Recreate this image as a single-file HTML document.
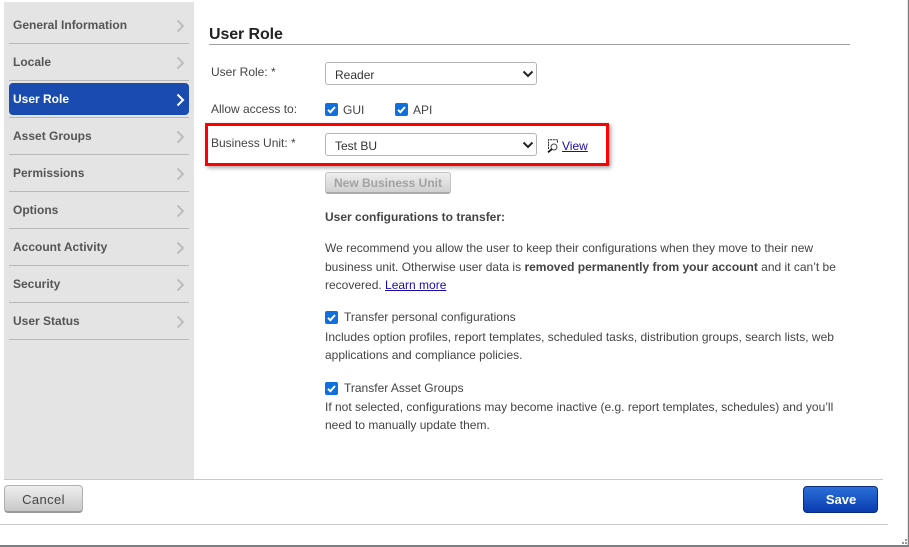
<!DOCTYPE html>
<html><head><meta charset="utf-8"><style>
html,body{margin:0;padding:0;background:#fff}
body{width:909px;height:547px;position:relative;overflow:hidden;font-family:"Liberation Sans",Arial,sans-serif;font-size:12px;color:#444}
.a{position:absolute;white-space:nowrap}
.t{line-height:16px}
.nav{left:13px;font-weight:bold;color:#555;line-height:16px}
.ln{position:absolute;left:9px;width:180px;height:1px;background:#b8b8b8}
.ch{position:absolute;left:175.500px;width:9px;height:14px}
.sel{position:absolute;left:325px;width:210px;background:#fff;border:1px solid #b4b4b4;border-radius:3px;height:21px;line-height:25px;color:#333}
.sel span{position:absolute;left:9px;top:0}
.sel svg{position:absolute;right:2px;top:7px}
.cb{position:absolute;width:13px;height:13px;background:#0f6fdc;border-radius:2px}
a{color:#1a0dab;text-decoration:underline}
</style></head><body>
<div class="a" style="left:4px;top:2px;width:190px;height:477px;background:#e4e4e4"></div>

<div class="a nav" style="top:17px">General Information</div>
<div class="a nav" style="top:54px">Locale</div>
<div class="a" style="left:9px;top:83px;width:180px;height:32px;background:#1a4cb0;border-radius:4px"></div>
<div class="a nav" style="top:91px;color:#fff">User Role</div>
<div class="a nav" style="top:128px">Asset Groups</div>
<div class="a nav" style="top:165px">Permissions</div>
<div class="a nav" style="top:202px">Options</div>
<div class="a nav" style="top:239px">Account Activity</div>
<div class="a nav" style="top:276px">Security</div>
<div class="a nav" style="top:313px">User Status</div>

<div class="ln" style="top:43px"></div><div class="ln" style="top:80px"></div><div class="ln" style="top:117px"></div><div class="ln" style="top:154px"></div><div class="ln" style="top:191px"></div><div class="ln" style="top:228px"></div><div class="ln" style="top:265px"></div><div class="ln" style="top:302px"></div><div class="ln" style="top:339px"></div>

<svg class="ch" style="top:19px" viewBox="0 0 9 14"><path d="M1.500 1.500 7 7l-5.500 5.500" fill="none" stroke="#bdbdbd" stroke-width="2"/></svg>
<svg class="ch" style="top:56px" viewBox="0 0 9 14"><path d="M1.500 1.500 7 7l-5.500 5.500" fill="none" stroke="#bdbdbd" stroke-width="2"/></svg>
<svg class="ch" style="top:93px" viewBox="0 0 9 14"><path d="M1.500 1.500 7 7l-5.500 5.500" fill="none" stroke="#fff" stroke-width="2"/></svg>
<svg class="ch" style="top:130px" viewBox="0 0 9 14"><path d="M1.500 1.500 7 7l-5.500 5.500" fill="none" stroke="#bdbdbd" stroke-width="2"/></svg>
<svg class="ch" style="top:167px" viewBox="0 0 9 14"><path d="M1.500 1.500 7 7l-5.500 5.500" fill="none" stroke="#bdbdbd" stroke-width="2"/></svg>
<svg class="ch" style="top:204px" viewBox="0 0 9 14"><path d="M1.500 1.500 7 7l-5.500 5.500" fill="none" stroke="#bdbdbd" stroke-width="2"/></svg>
<svg class="ch" style="top:241px" viewBox="0 0 9 14"><path d="M1.500 1.500 7 7l-5.500 5.500" fill="none" stroke="#bdbdbd" stroke-width="2"/></svg>
<svg class="ch" style="top:278px" viewBox="0 0 9 14"><path d="M1.500 1.500 7 7l-5.500 5.500" fill="none" stroke="#bdbdbd" stroke-width="2"/></svg>
<svg class="ch" style="top:315px" viewBox="0 0 9 14"><path d="M1.500 1.500 7 7l-5.500 5.500" fill="none" stroke="#bdbdbd" stroke-width="2"/></svg>

<div class="a" style="left:209px;top:26px;font-size:16px;font-weight:bold;color:#222;line-height:18px;letter-spacing:-.1px">User Role</div>
<div class="a" style="left:209px;top:44px;width:641px;height:1px;background:#a0a0a0"></div>

<div class="a t" style="left:211px;top:64px">User Role: *</div>
<div class="sel" style="top:62px"><span>Reader</span><svg width="12" height="8" viewBox="0 0 12 8"><path d="M1.500 1.500 6 6l4.500-4.500" fill="none" stroke="#222" stroke-width="2"/></svg></div>

<div class="a t" style="left:211px;top:101px">Allow access to:</div>
<svg class="cb" style="left:325px;top:103px" viewBox="0 0 13 13"><path d="M3 6.800 5.400 9.200 10 4" fill="none" stroke="#fff" stroke-width="2"/></svg>
<div class="a t" style="left:343px;top:102px">GUI</div>
<svg class="cb" style="left:395px;top:103px" viewBox="0 0 13 13"><path d="M3 6.800 5.400 9.200 10 4" fill="none" stroke="#fff" stroke-width="2"/></svg>
<div class="a t" style="left:413px;top:102px">API</div>

<div class="a" style="left:205px;top:123px;width:398px;height:37px;border:3px solid #f00;box-shadow:2px 2px 4px rgba(0,0,0,.35)"></div>
<div class="a t" style="left:211px;top:135px">Business Unit: *</div>
<div class="sel" style="top:133px"><span>Test BU</span><svg width="12" height="8" viewBox="0 0 12 8"><path d="M1.500 1.500 6 6l4.500-4.500" fill="none" stroke="#222" stroke-width="2"/></svg></div>
<svg class="a" style="left:547px;top:139px" width="12" height="14" viewBox="0 0 12 14"><path d="M1.500 10V.8h9v3.500" fill="none" stroke="#222" stroke-dasharray="2 .7"/><circle cx="7" cy="8" r="3" fill="#fff" stroke="#444"/><path d="M4.800 10.200 1 13.300" stroke="#111" stroke-width="1.800"/></svg>
<a class="a t" style="left:562px;top:138px" href="#">View</a>

<div class="a" style="left:325px;top:172px;width:124px;height:19px;border:1px solid #c4c4c4;border-bottom:2px solid #aaa;border-radius:3px;background:linear-gradient(#eee,#d0d0d0);color:#a2a2a2;font-weight:bold;text-align:center;line-height:20px">New Business Unit</div>

<div class="a t" style="left:325px;top:209px;font-weight:bold">User configurations to transfer:</div>
<div class="a t" style="left:325px;top:240px">We recommend you allow the user to keep their configurations when they move to their new</div>
<div class="a t" style="left:325px;top:259px">business unit. Otherwise user data is <b>removed permanently from your account</b> and it can’t be</div>
<div class="a t" style="left:325px;top:277px">recovered. <a href="#">Learn more</a></div>

<svg class="cb" style="left:325px;top:311px" viewBox="0 0 13 13"><path d="M3 6.800 5.400 9.200 10 4" fill="none" stroke="#fff" stroke-width="2"/></svg>
<div class="a t" style="left:344px;top:309px">Transfer personal configurations</div>
<div class="a t" style="left:325px;top:329px">Includes option profiles, report templates, scheduled tasks, distribution groups, search lists, web</div>
<div class="a t" style="left:325px;top:347px">applications and compliance policies.</div>

<svg class="cb" style="left:325px;top:382px" viewBox="0 0 13 13"><path d="M3 6.800 5.400 9.200 10 4" fill="none" stroke="#fff" stroke-width="2"/></svg>
<div class="a t" style="left:344px;top:380px">Transfer Asset Groups</div>
<div class="a t" style="left:325px;top:399px">If not selected, configurations may become inactive (e.g. report templates, schedules) and you’ll</div>
<div class="a t" style="left:325px;top:417px">need to manually update them.</div>

<div class="a" style="left:4px;top:479px;width:879px;height:1px;background:#c8c8c8"></div>
<div class="a" style="left:0;top:524px;width:888px;height:1px;background:#c8c8c8"></div>
<div class="a" style="left:4px;top:485px;width:77px;height:25px;border:1px solid #b0b0b0;border-bottom:2px solid #999;border-radius:4px;background:linear-gradient(#eee,#c8c8c8);color:#444;font-size:13px;text-align:center;line-height:27px;letter-spacing:.4px">Cancel</div>
<div class="a" style="left:803px;top:486px;width:73px;height:25px;border:1px solid #0a2c80;border-radius:4px;background:linear-gradient(#2a6fd8,#0a3cb0);color:#fff;font-size:13px;font-weight:bold;text-align:center;line-height:26px;text-indent:1px">Save</div>

<div class="a" style="left:907px;top:0;width:1px;height:545px;background:#dde4ee"></div>
<div class="a" style="left:908px;top:0;width:1px;height:547px;background:#7a7f80"></div>
<div class="a" style="left:0;top:545px;width:909px;height:2px;background:#7a7f80"></div>
<div class="a" style="left:905px;top:539px;width:2px;height:2px;background:#999"></div>
<div class="a" style="left:902px;top:542px;width:2px;height:2px;background:#999"></div>
<div class="a" style="left:905px;top:542px;width:2px;height:2px;background:#999"></div>
</body></html>
